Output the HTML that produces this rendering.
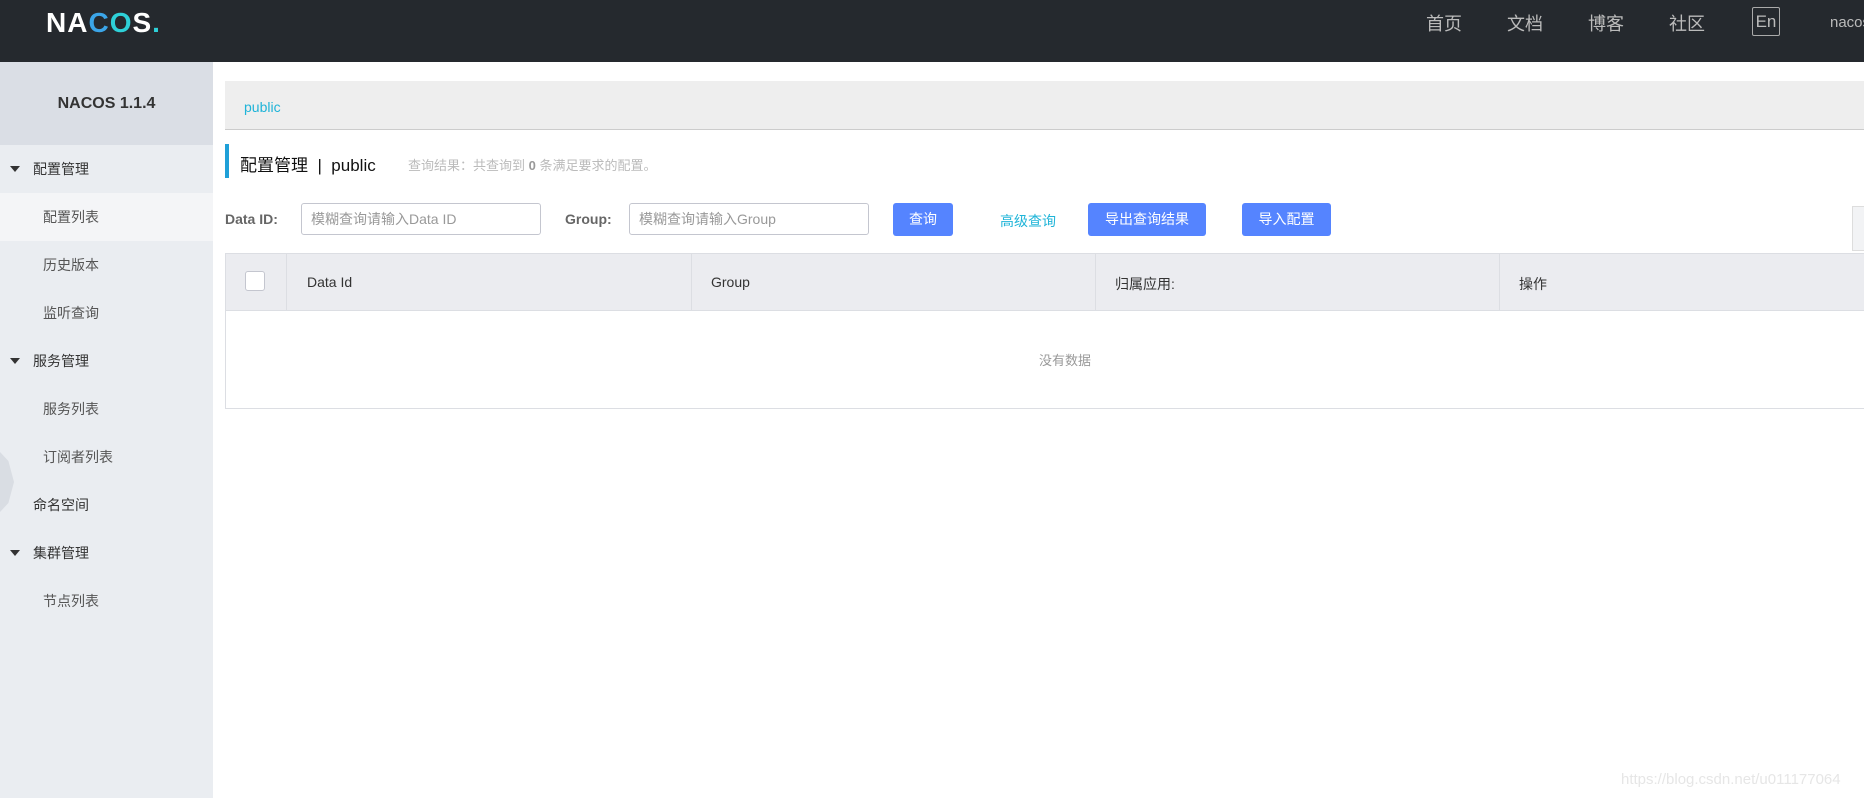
<!DOCTYPE html>
<html><head><meta charset="utf-8"><style>
*{margin:0;padding:0;box-sizing:border-box}
body{width:1864px;height:798px;overflow:hidden;background:#fff;font-family:"Liberation Sans","Noto Sans CJK SC",sans-serif;position:relative}
.hd{position:absolute;left:0;top:0;width:1864px;height:62px;background:#25292e}
.logo{position:absolute;left:46px;top:7px;font-size:28px;font-weight:bold;color:#fff;letter-spacing:1px}
.logo i{font-style:normal;color:#3ba5e8}
.logo b{color:#2ed0d8}
.nav{position:absolute;top:10px;font-size:18px;color:#bbb}
.en{position:absolute;left:1752px;top:7px;width:28px;height:29px;border:1px solid #aaa;border-radius:2px;color:#bbb;font-size:17px;text-align:center;line-height:27px}
.sb{position:absolute;left:0;top:62px;width:213px;height:736px;background:#eaedf1}
.ver{height:83px;background:#dadee5;font-weight:bold;font-size:16px;color:#333;text-align:center;line-height:83px}
.mi{height:48px;line-height:48px;font-size:14px;color:#333;position:relative;padding-left:33px}
.mi.c{padding-left:43px;color:#555}
.mi.a{background:#f4f5f7}
.mi .t{position:absolute;left:10px;top:21px;width:0;height:0;border-left:5px solid transparent;border-right:5px solid transparent;border-top:6px solid #333}
.hex{position:absolute;left:0;top:452px;width:14px;height:60px;background:#d9dde3;clip-path:polygon(0 0,60% 15%,100% 50%,60% 85%,0 100%)}
.bc{position:absolute;left:225px;top:81px;width:1639px;height:49px;background:#eeeeee;border-bottom:1px solid #ccc;font-size:14px;color:#1fb4d8;padding-left:19px;line-height:52px}
.bar{position:absolute;left:225px;top:144px;width:4px;height:34px;background:#1fa0d8}
.tt{position:absolute;left:240px;top:151px;font-size:17px;color:#111}
.sub{position:absolute;left:408px;top:155px;font-size:13px;color:#bbb}
.sub b{color:#999}
.lb{position:absolute;top:211px;font-size:14px;font-weight:bold;color:#666}
.in{position:absolute;top:203px;height:32px;width:240px;border:1px solid #c4c6cf;border-radius:3px;font-size:14px;color:#999;padding-left:9px;line-height:30px}
.bt{position:absolute;top:203px;height:33px;background:#5584ff;color:#fff;border-radius:3px;font-size:14px;text-align:center;line-height:33px}
.tb{position:absolute;left:225px;top:253px;width:1639px;height:156px;border:1px solid #dcdee3;border-right:none}
.th{height:57px;background:#ebecf0;border-bottom:1px solid #dcdee3;position:relative;font-size:14px;color:#333}
.th span{position:absolute;top:20px}
.dv{position:absolute;top:0;width:1px;height:56px;background:#dcdee3}
.cb{position:absolute;left:19px;top:17px;width:20px;height:20px;background:#fff;border:1px solid #c4c6cf;border-radius:3px}
.nd{position:absolute;left:0;width:100%;top:96px;text-align:center;font-size:13px;color:#999;padding-left:40px}
.wm{position:absolute;left:1621px;top:771px;font-size:15px;color:#e6e6e6}
</style></head><body>
<div class="hd">
<div class="logo">NA<i>C</i><b>O</b>S<b>.</b></div>
<div class="nav" style="left:1426px">首页</div>
<div class="nav" style="left:1507px">文档</div>
<div class="nav" style="left:1588px">博客</div>
<div class="nav" style="left:1669px">社区</div>
<div class="en">En</div>
<div class="nav" style="left:1830px;font-size:15px;top:14px">nacos</div>
</div>
<div class="sb">
<div class="ver">NACOS 1.1.4</div>
<div class="mi"><span class="t"></span>配置管理</div>
<div class="mi c a">配置列表</div>
<div class="mi c">历史版本</div>
<div class="mi c">监听查询</div>
<div class="mi"><span class="t"></span>服务管理</div>
<div class="mi c">服务列表</div>
<div class="mi c">订阅者列表</div>
<div class="mi">命名空间</div>
<div class="mi"><span class="t"></span>集群管理</div>
<div class="mi c">节点列表</div>
</div>
<div class="hex"></div>
<div class="bc">public</div>
<div class="bar"></div>
<div class="tt">配置管理 &nbsp;| &nbsp;public</div>
<div class="sub">查询结果：共查询到 <b>0</b> 条满足要求的配置。</div>
<div class="lb" style="left:225px">Data ID:</div>
<div class="in" style="left:301px">模糊查询请输入Data ID</div>
<div class="lb" style="left:565px">Group:</div>
<div class="in" style="left:629px">模糊查询请输入Group</div>
<div class="bt" style="left:893px;width:60px">查询</div>
<div style="position:absolute;left:1000px;top:211px;font-size:14px;color:#1fb4d8">高级查询</div>
<div class="bt" style="left:1088px;width:118px">导出查询结果</div>
<div class="bt" style="left:1242px;width:89px">导入配置</div>
<div style="position:absolute;left:1852px;top:206px;width:14px;height:45px;background:#f2f3f5;border:1px solid #ddd"></div>
<div class="tb">
<div class="th">
<div class="cb"></div>
<div class="dv" style="left:60px"></div>
<span style="left:81px">Data Id</span>
<div class="dv" style="left:465px"></div>
<span style="left:485px">Group</span>
<div class="dv" style="left:869px"></div>
<span style="left:889px">归属应用:</span>
<div class="dv" style="left:1273px"></div>
<span style="left:1293px">操作</span>
</div>
<div class="nd">没有数据</div>
</div>
<div class="wm">https://blog.csdn.net/u011177064</div>
</body></html>
